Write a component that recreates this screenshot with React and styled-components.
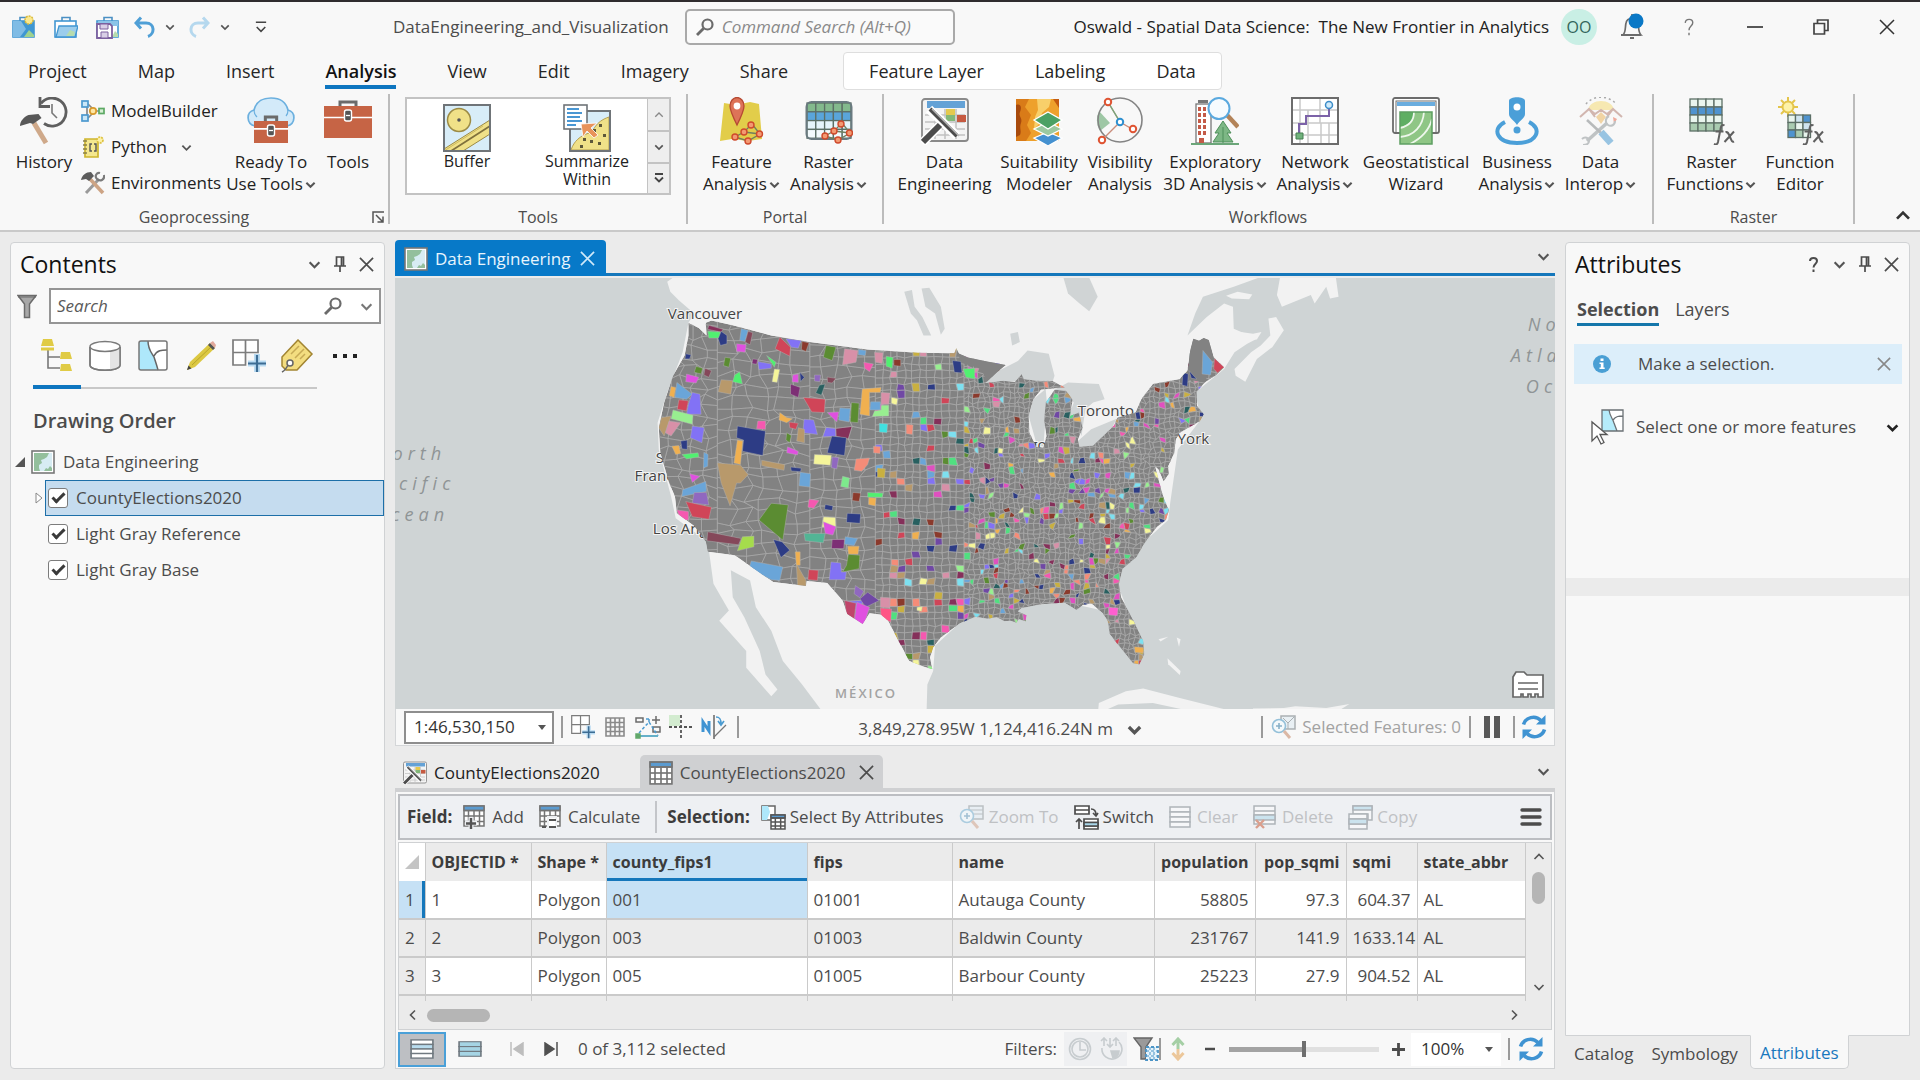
import { useState } from 'react';
import styled, { createGlobalStyle, css } from 'styled-components';

const GlobalStyle = createGlobalStyle`
  *, *::before, *::after { box-sizing: border-box; }
  body {
    margin: 0;
    background: #ebebeb;
    color: #4c4c4c;
    font-family: 'Open Sans', 'Noto Sans', sans-serif;
    font-size: 17px;
    line-height: 22px;
  }
  button, input, select { font: inherit; color: inherit; }
  button { background: transparent; border: none; padding: 0; cursor: pointer; }
  svg { display: block; flex: none; }
  h1, h2, p { margin: 0; }
`;

/* ---------- shared ---------- */

const Page = styled.div`
  display: flex;
  flex-direction: column;
  height: 100vh;
  overflow: hidden;
`;

const Divider = styled.span`
  flex: none;
  width: 2px;
  height: ${(p) => p.$h || 22}px;
  background: ${(p) => p.$color || '#9a9a9a'};
`;

const Spacer = styled.span`
  flex: 1;
`;

const IconButton = styled.button`
  display: grid;
  place-items: center;
  flex: none;
  width: ${(p) => p.$w || 26}px;
  height: ${(p) => p.$h || 26}px;
`;

const Chevron = ({ size = 12, color = '#555', weight = 2, dir = 'down' }) => {
  const turn = { down: 0, left: 90, up: 180, right: 270 }[dir];
  return (
    <svg width={size} height={size} viewBox="0 0 12 12">
      <path d="M1.5 4 6 8.5 10.5 4" transform={`rotate(${turn} 6 6)`} fill="none" stroke={color} strokeWidth={weight} />
    </svg>
  );
};

const Cross = ({ size = 16, color = '#4c4c4c', weight = 1.8 }) => (
  <svg width={size} height={size} viewBox="0 0 16 16">
    <path d="M1 1 15 15M15 1 1 15" stroke={color} strokeWidth={weight} />
  </svg>
);

const Pin = () => (
  <svg width="12" height="16" viewBox="0 0 12 16">
    <path d="M2.5 9.5V1h7v8.5M0 10h12M6 10v6M7.5 1v9" fill="none" stroke="#4c4c4c" strokeWidth="1.7" />
  </svg>
);

const Magnifier = ({ color = '#6b6b6b' }) => (
  <svg width="18" height="18" viewBox="0 0 18 18">
    <circle cx="11.5" cy="6.5" r="5" fill="none" stroke={color} strokeWidth="2.2" />
    <path d="M7.5 10.5 1 17" stroke={color} strokeWidth="2.8" />
  </svg>
);

const Refresh = () => (
  <svg width="26" height="26" viewBox="0 0 26 26" fill="none" stroke="#3f93d2" strokeWidth="3.6">
    <path d="M2.5 10.5C4.5 3.5 14 .5 20 6.5" />
    <path d="M23.5 15.5C21.5 22.5 12 25.5 6 19.5" />
    <path d="M24.5 1v9.5h-9.5zM1.5 25v-9.5h9.5z" fill="#3f93d2" stroke="none" />
  </svg>
);

const Funnel = () => (
  <svg width="20" height="26" viewBox="0 0 20 26">
    <path d="M1 2.5h18L12.5 11v13.5h-5V11z" fill="#a8a8a8" stroke="#6b6b6b" strokeWidth="1.5" />
    <path d="M1 4h18" stroke="#6b6b6b" />
  </svg>
);

const MapThumb = ({ size = 24 }) => (
  <svg width={size} height={size} viewBox="0 0 24 24">
    <rect x="1" y="1" width="22" height="22" fill="#fff" stroke="#777" strokeWidth="1.6" />
    <path d="M3 3h18v18H3z" fill="#d7ecf3" />
    <path d="M3 3h15l-2 4-3 2-3 1 1 3-3 2v3l1 3H3zM13 21l2-3 2 1 2-3 2 2v3z" fill="#93bf9c" />
  </svg>
);

const GridPlus = ({ size = 24 }) => (
  <svg width={size} height={size} viewBox="0 0 34 34">
    <path d="M1 1h25v12.5H1zM1 13.5h12.5V26H1zM13.5 1v12.5" fill="#fff" stroke="#7c7c7c" strokeWidth="1.7" />
    <path d="M25 15v18M16 24.5h18" stroke="#b9dbf2" strokeWidth="6" />
    <path d="M25 16v17M16 24.5h18" stroke="#3c6c93" strokeWidth="2.2" />
  </svg>
);

/* rows of a small table glyph, used by most of the table commands */
const TableGlyph = ({ x = 0, y = 0, w = 22, h = 22, head = '#5b9bd0', line = '#747474', cols = 4, rows = 4 }) => (
  <g fill="none" stroke={line} strokeWidth="1.5">
    <rect x={x + 1} y={y + 1} width={w - 2} height={h - 2} fill="#fff" />
    <rect x={x + 1} y={y + 1} width={w - 2} height={h / rows - 1} fill={head} />
    {Array.from({ length: rows - 1 }, (_, i) => (
      <path key={`r${i}`} d={`M${x + 1} ${y + ((i + 1) * h) / rows}h${w - 2}`} />
    ))}
    {Array.from({ length: cols - 1 }, (_, i) => (
      <path key={`c${i}`} d={`M${x + ((i + 1) * w) / cols} ${y + h / rows}v${h - h / rows - 1}`} />
    ))}
  </g>
);

/* ---------- ribbon drawings, 48 x 48 ---------- */

const Toolbox = ({ x, y, w, h }) => (
  <g>
    <path d={`M${x + w / 3} ${y + 6}v-5h${w / 3}v5`} fill="none" stroke="#6b6b6b" strokeWidth="3" />
    <rect x={x} y={y + 5} width={w} height={h - 5} fill="#c66445" />
    <path d={`M${x} ${y + 5 + (h - 5) * 0.36}h${w}`} stroke="#fff" strokeWidth="1.6" />
    <rect x={x + w / 2 - 3.5} y={y + 9} width="7" height="11" rx="2" fill="#555" stroke="#fff" strokeWidth="1.4" />
    <path d={`M${x + w / 2 - 2} ${y + 14.5}h4`} stroke="#fff" strokeWidth="1.3" />
  </g>
);

const NodeNet = ({ x, y }) => (
  <g transform={`translate(${x} ${y})`} stroke="#7a6a55" strokeWidth="1.4" fill="none">
    <path d="M4 15 13 10 21 2 29 12 17 19zM13 10l16 2" stroke="#6f7f5f" />
    {[[4, 15], [13, 10], [20, 3], [28.5, 12], [17, 19]].map(([cx, cy]) => (
      <circle key={cx} cx={cx} cy={cy} r="3" fill="#f39a72" stroke="#cf4a2c" />
    ))}
  </g>
);

const Checker = ({ x, y, cell, cols, rows, tones }) => (
  <g stroke="#5c6f66" strokeWidth="1.3">
    {Array.from({ length: cols * rows }, (_, i) => (
      <rect
        key={i}
        x={x + (i % cols) * cell}
        y={y + Math.floor(i / cols) * cell}
        width={cell}
        height={cell}
        fill={tones[(i * 7 + Math.floor(i / cols) * 2) % tones.length]}
      />
    ))}
  </g>
);

const EffEx = ({ x, y }) => (
  <g transform={`translate(${x} ${y})`} fill="none" stroke="#606060" strokeWidth="2">
    <path d="M10.5 1.5C7.5-.5 6.8 3 6.3 6L4 18c-.6 2.5-2 3-4 2M1.5 7.5h8" />
    <path d="M11.5 8c2.5-.5 3 1.5 4.5 5s2 5.5 4 4.5M20 7.5 10.5 18" />
  </g>
);

const drawings = {
  history: (
    <g fill="none">
      <path d="M21 6.500A14 14 0 1 1 24 26.500" stroke="#5f5f5f" strokeWidth="2.8" />
      <path d="M20 0v9.500h10" stroke="#5f5f5f" strokeWidth="2.8" />
      <path d="M32 7v9l5 5" stroke="#777" strokeWidth="1.6" />
      <path d="M14 26 26 46" stroke="#cfa98a" strokeWidth="5" />
      <path d="M0 29c0-5 4-9 8.500-11l10-1 3 4-8.500 6-3-1z" fill="#585858" />
    </g>
  ),
  cloudTools: (
    <g>
      <path d="M8 29C-1 27-1 15 7 13 9 5 15 1 24 1s15 4 17 12c8 2 8 14-1 16z" fill="#d3eaf9" stroke="#6cb0df" strokeWidth="1.7" />
      <path d="M7 13c0 3 1 5 3 7M41 13c0 3-1 5-2 6" fill="none" stroke="#6cb0df" strokeWidth="1.2" />
      <Toolbox x={7} y={19} w={34} h={27} />
    </g>
  ),
  toolbox: <Toolbox x={0} y={4} w={48} h={37} />,
  buffer: (
    <g>
      <rect x="1" y="1" width="46" height="46" fill="#d8edf8" />
      <circle cx="16" cy="16" r="11.5" fill="#f0e188" stroke="#9c8b45" strokeWidth="1.5" />
      <circle cx="16" cy="16" r="1.8" fill="#555" />
      <path d="M1 45 47 16v14L20 47H1z" fill="#f0e188" stroke="#9c8b45" />
      <path d="M8 47 47 22" stroke="#80713c" strokeWidth="1.7" />
      <path d="M1 47 40 22" stroke="#cdb95f" />
      <rect x="1" y="1" width="46" height="46" fill="none" stroke="#6f7478" strokeWidth="2" />
    </g>
  ),
  summarize: (
    <g>
      <rect x="7" y="7" width="40" height="40" fill="#d8edf8" />
      <path d="M8 46c3-9 9-14 18-17 6-2 5-11 20-16v33z" fill="#f0e188" stroke="#b59f50" />
      <rect x="7" y="7" width="40" height="40" fill="none" stroke="#6f7478" strokeWidth="2" />
      <path d="M36 20h3v3h-3zM30 25h3v3h-3zM40 30h3v3h-3zM27 36h3v3h-3zM35 38h3v3h-3zM17 41h3v3h-3zM20 34h3v3h-3z" fill="#5d573a" />
      <rect x="1" y="1" width="23" height="24" fill="#fff" stroke="#6f7478" strokeWidth="1.6" />
      <path d="M4 5h12M4 9h15M4 13h13M4 17h15M4 21h9" stroke="#4a97d3" strokeWidth="1.8" />
      <path d="M18 20 34 19 28 24 35 31 31 34 24 27 20 33z" fill="#e8935a" stroke="#fff" strokeWidth=".8" />
    </g>
  ),
  featureAnalysis: (
    <g>
      <path d="M6 6 18 8 32 5 41 7 44 42 30 44 14 42 2 44z" fill="#e2cd4a" />
      <path d="M19 28C15 20 12 14 12 9a7 8.500 0 0 1 14 0c0 5-3 11-7 19z" fill="#dd7358" stroke="#b64a33" strokeWidth="1.3" />
      <circle cx="19" cy="9" r="3.4" fill="#fff" />
      <NodeNet x={13} y={25} />
    </g>
  ),
  rasterAnalysis: (
    <g>
      <Checker x={2} y={6} cell={8.8} cols={5} rows={4} tones={['#83b98d', '#e6f5fb', '#5aa5da', '#b8dcec', '#e6f5fb', '#94d0ef', '#f3fafd']} />
      <rect x="1.5" y="5" width="45" height="37" rx="5" fill="none" stroke="#6a7a80" strokeWidth="2" />
      <NodeNet x={16} y={24} />
    </g>
  ),
  dataEngineering: (
    <g>
      <rect x="1" y="2" width="46" height="42" rx="3" fill="#f4f4f4" stroke="#8a8a8a" strokeWidth="1.8" />
      <path d="M6 4h38v7H6z" fill="#64a2d6" />
      <path d="M4 18h40M4 25h40M4 32h40M4 38h40M14 12v30M24 12v30M35 12v30" stroke="#c1c1c1" strokeWidth="1.5" />
      <path d="M25 12h9v6h-9z" fill="#e4c94e" />
      <path d="M36 18h9v7h-9z" fill="#c65a41" />
      <path d="M25 18h9v6h-9z" fill="#83b878" />
      <path d="M1 46 18 29M8 12 36 39" stroke="#fff" strokeWidth="9" />
      <path d="M2 45 19 28" stroke="#4c4c4c" strokeWidth="6" />
      <path d="M9 12 36 39" stroke="#4c4c4c" strokeWidth="4" />
      <path d="M11 12 38 39" stroke="#b5b5b5" strokeWidth="1.5" />
    </g>
  ),
  suitability: (
    <g>
      <rect x="1" y="2" width="43" height="42" fill="#eea12c" />
      <path d="M1 2h13l-4 8 6 8-4 10 4 8-5 8H1z" fill="#d97b18" />
      <path d="M1 8c5-2 6 3 4 7s3 6 1 11 1 8-1 12l-4 2z" fill="#a84a0c" />
      <path d="M22 2h14l-2 8-7 6-2 10-6 6 1-12 3-7z" fill="#f8cf6a" />
      <path d="M38 2h6v9z" fill="#c45b10" />
      <g stroke="#fff" strokeWidth="1.3">
        <path d="m33 35 14 6-14 8-14-8z" fill="#4591d0" />
        <path d="m33 25 14 7-14 7-14-7z" fill="#9cc9a0" />
        <path d="m33 15 14 8-14 9-14-9z" fill="#4ca164" />
      </g>
    </g>
  ),
  visibility: (
    <g fill="none">
      <path d="M3 14 14 26 4 34A22 22 0 0 1 3 14z" fill="#9ec7a5" />
      <circle cx="24" cy="23" r="22" stroke="#848484" strokeWidth="1.6" />
      <path d="M12 5 24 25 36 32M24 25 6 43" stroke="#c98d7c" strokeWidth="1.4" />
      <path d="M12 5 24 25" stroke="#74a77b" strokeWidth="1.4" />
      <circle cx="24" cy="25" r="3.2" fill="#fff" stroke="#2d8fd0" strokeWidth="2" />
      <g fill="#fff" stroke="#df5433" strokeWidth="2">
        <circle cx="12" cy="5" r="3.2" />
        <circle cx="37" cy="32" r="3.2" />
        <circle cx="6" cy="43" r="3.2" />
      </g>
    </g>
  ),
  exploratory: (
    <g>
      <path d="M7 3h10v3H7z" fill="#777" />
      <rect x="5" y="7" width="15" height="39" fill="#fff" stroke="#777" strokeWidth="1.3" />
      <path d="M7 10h3v4H7zm5 0h3v4h-3zM7 16h3v4H7zm5 0h3v4h-3zM7 22h3v4H7zm5 0h3v4h-3zM7 28h3v4H7zm5 0h3v4h-3zM7 34h3v4H7zm5 0h3v4h-3zM8 41h5v5H8z" fill="#c45b48" />
      <path d="M32 24 24 36h4l-6 9h20l-6-9h4z" fill="#7db785" stroke="#4f8f5a" />
      <path d="M32 30v16" stroke="#4f8f5a" />
      <path d="M0 47h48" stroke="#6ba679" strokeWidth="1.8" />
      <path d="m36 18 11 12" stroke="#b38358" strokeWidth="4.5" />
      <circle cx="28" cy="11.5" r="10.5" fill="#f6fbfe" stroke="#5aa9df" strokeWidth="2" />
    </g>
  ),
  network: (
    <g fill="none">
      <rect x="1" y="1" width="46" height="46" fill="#fff" />
      <path d="M1 13h46M1 26h46M1 38h46M9 1v46M29 1v25M38 26v21M30 26v21M17 13v34" stroke="#c9c9c9" strokeWidth="1.5" />
      <path d="M8 38V27h7v-8h23V9" stroke="#7c62a8" strokeWidth="2" />
      <circle cx="38" cy="8" r="3.5" fill="#cfeafa" stroke="#3c8cc8" strokeWidth="1.5" />
      <path d="M5 36h7v6H5z" fill="#70b27c" stroke="#457e50" />
      <rect x="1" y="1" width="46" height="46" stroke="#6c6c6c" strokeWidth="2" />
    </g>
  ),
  geostat: (
    <g fill="none">
      <rect x="1" y="1" width="46" height="35" rx="2" fill="#fff" stroke="#6c6c6c" strokeWidth="1.8" />
      <rect x="4" y="4" width="40" height="32" stroke="#6c6c6c" />
      <path d="M5 5h38v4H5z" fill="#6aaddf" />
      <path d="M8 15h32v32H8z" fill="#8fc685" />
      <path d="M8 15h15c-1 8-6 13-15 15z" fill="#5fae63" />
      <path d="M22 15c0 9-5 14-14 16M32 15c-1 14-10 24-24 25M40 22c-3 12-12 20-22 25" stroke="#eef7ec" strokeWidth="1.8" />
      <path d="M8 15h32v32H8z" stroke="#5e9f62" strokeWidth="1.5" />
    </g>
  ),
  business: (
    <g>
      <path d="M16 4c0-5 16-5 16 0v13c0 4-5 6-8 11-3-5-8-7-8-11z" fill="#4b9fd8" />
      <circle cx="24" cy="10" r="3.5" fill="#fff" />
      <circle cx="24" cy="33" r="3.5" fill="#4b9fd8" />
      <path d="M12 25c-14 7-8 21 12 21s26-14 12-21" fill="none" stroke="#4b9fd8" strokeWidth="4" />
    </g>
  ),
  interop: (
    <g fill="none" opacity=".6">
      <path d="M11 13C13 1 35 1 37 13z" fill="#f5df82" />
      <path d="M9 7C16-2 32-2 39 7" stroke="#777" strokeWidth="1.5" strokeDasharray="2 3" />
      <path d="M3 20 12 12l6 8M45 20l-9-8-6 8M12 12l6 5 6-4 6 4 6-5" stroke="#b98b80" strokeWidth="2" />
      <path d="m24 15 5 5-5 7-5-7z" fill="#edbd6e" />
      <path d="m36 20 4 2-3 5z" fill="#e9755e" />
      <path d="M10 44 30 26" stroke="#9aa0a3" strokeWidth="3.5" />
      <path d="M38 24c0 4-4 6-7 4s-3-7 1-9M5 42c3-3 7-1 7 2s-3 4-6 4" stroke="#9aa0a3" strokeWidth="2" />
      <path d="M10 23 24 36" stroke="#8c9194" strokeWidth="2.5" />
      <path d="M24 35 34 46" stroke="#5aa3d4" strokeWidth="7" />
    </g>
  ),
  rasterFx: (
    <g>
      <Checker x={2} y={2} cell={8} cols={4} rows={4} tones={['#e9f5ee', '#8bb992', '#4f93cf', '#cfe4ef', '#e9f5ee', '#6fa67a', '#a9cbb0']} />
      <EffEx x={26} y={27} />
    </g>
  ),
  functionEditor: (
    <g>
      <g stroke="#e4c54b" strokeWidth="2">
        <path d="M12 0v20M2 10h20M5 3l14 14M19 3 5 17" />
        <circle cx="12" cy="10" r="5.5" fill="#fdf2a8" />
      </g>
      <Checker x={12} y={18} cell={7.5} cols={3} rows={3} tones={['#e9f5ee', '#4f93cf', '#cfe4ef', '#a9cbb0', '#4f93cf']} />
      <EffEx x={27} y={27} />
    </g>
  ),
};

const Drawing = ({ name, size = 48 }) => (
  <svg width={size} height={size} viewBox="0 0 48 48">{drawings[name]}</svg>
);

/* ---------- title bar ---------- */

const TitleBar = styled.header`
  display: flex;
  align-items: center;
  height: 52px;
  border-top: 2px solid #2f2c2e;
  background: #f8f8f8;
`;

const QuickAccess = styled.div`
  display: flex;
  align-items: center;
  gap: 14px;
  width: 393px;
  padding-left: 12px;

  .cases { display: flex; gap: 18px; }
  .pair { display: flex; align-items: center; gap: 10px; }
`;

const CommandSearch = styled.label`
  display: flex;
  align-items: center;
  gap: 8px;
  width: 270px;
  height: 36px;
  margin-left: 16px;
  padding: 0 9px;
  border: 2px solid #a9a9a9;
  border-radius: 5px;
  background: #fafafa;

  input {
    flex: 1;
    min-width: 0;
    padding: 0;
    border: none;
    background: transparent;
    outline: none;
    font-style: italic;
  }
  input::placeholder { color: #8a8a8a; opacity: 1; }
`;

const DocTitle = styled.h1`
  font-size: 17px;
  font-weight: 400;
  white-space: nowrap;
`;

const PortalName = styled.p`
  margin-left: auto;
  color: #222;
  white-space: pre;
`;

const Avatar = styled.span`
  display: grid;
  place-items: center;
  width: 36px;
  height: 36px;
  margin: 0 11px 0 12px;
  border-radius: 50%;
  background: #c9efe5;
  color: #33665c;
  font-size: 16px;
`;

const QuickCase = ({ kind }) => (
  <svg width="24" height="24" viewBox="0 0 24 24">
    <path d="M8 6V2.500h8V6" fill="none" stroke="#4b90c4" strokeWidth="1.6" />
    <rect x="1" y="6" width="21" height="16" fill={kind === 'new' ? '#3f97d3' : '#fff'} stroke="#4297d2" strokeWidth="1.6" />
    {kind === 'new' && (
      <g>
        <path d="M1 6h8l5 8-6 8H1z" fill="#80bce5" />
        <path d="m12 22 5-7 5 5v2z" fill="#9fd28f" />
        <circle cx="17" cy="5" r="4" fill="#fbe98e" stroke="#d9b93c" strokeWidth="1.5" strokeDasharray="2 1" />
      </g>
    )}
    {kind === 'open' && (
      <g>
        <path d="M5 11h19l-3 11H2z" fill="#9ccdec" stroke="#4297d2" strokeWidth="1.3" />
        <path d="m12 21 4-6 5 2-1 4z" fill="#b7dcae" />
      </g>
    )}
    {kind === 'save' && (
      <g>
        <path d="M2 6h20v5H2z" fill="#8cc4e8" />
        <path d="m16 22 3-6 3 3v3z" fill="#b7dcae" />
        <path d="M1 9h13l2 2v12H1z" fill="#fff" stroke="#7d619f" strokeWidth="1.8" />
        <path d="M4 9h8v5H4zM5 17h7v6H5z" fill="#d9cfe6" stroke="#7d619f" />
      </g>
    )}
  </svg>
);

const Curl = ({ flip, color }) => (
  <svg width="21" height="22" viewBox="0 0 21 22">
    <g transform={flip ? 'translate(21 0) scale(-1 1)' : undefined} fill="none" stroke={color} strokeWidth="3">
      <path d="M7 1.500 2 7l5 5.500M2.500 7H12c9 0 9 11 2 13.500" />
    </g>
  </svg>
);

const Title = () => (
  <TitleBar>
    <QuickAccess>
      <span className="cases">
        <button type="button" aria-label="New project"><QuickCase kind="new" /></button>
        <button type="button" aria-label="Open project"><QuickCase kind="open" /></button>
        <button type="button" aria-label="Save project"><QuickCase kind="save" /></button>
      </span>
      <span className="pair">
        <button type="button" aria-label="Undo"><Curl color="#4f9fd6" /></button>
        <Chevron size={10} />
      </span>
      <span className="pair">
        <button type="button" aria-label="Redo"><Curl flip color="#b5d8ee" /></button>
        <Chevron size={10} />
      </span>
      <IconButton type="button" $w={34} aria-label="Customize">
        <svg width="12" height="14" viewBox="0 0 14 14" fill="none" stroke="#444" strokeWidth="1.8">
          <path d="M1 1.500h12M2 7l5 5 5-5" />
        </svg>
      </IconButton>
    </QuickAccess>
    <DocTitle>DataEngineering_and_Visualization</DocTitle>
    <CommandSearch>
      <Magnifier />
      <input type="text" aria-label="Command Search" placeholder="Command Search (Alt+Q)" />
    </CommandSearch>
    <PortalName>Oswald - Spatial Data Science:  The New Frontier in Analytics</PortalName>
    <Avatar>OO</Avatar>
    <IconButton type="button" $w={48} $h={36} aria-label="Notifications">
      <svg width="24" height="28" viewBox="0 0 24 28">
        <path d="M3 22c3-3 2-8 3-12 1-6 11-6 12 0 1 4 0 9 3 12zM12 1v4" fill="none" stroke="#6b6b6b" strokeWidth="1.7" />
        <path d="M1 22h20M10 25h4" stroke="#6b6b6b" strokeWidth="2" />
        <circle cx="16" cy="8" r="7.5" fill="#0a78c6" />
      </svg>
    </IconButton>
    <IconButton type="button" $w={66} $h={36} aria-label="Help">
      <svg width="10" height="18" viewBox="0 0 12 20" fill="none" stroke="#777" strokeWidth="1.7">
        <path d="M1.500 5C2-.5 10.500-.5 10.500 5c0 4-4.500 4-4.500 9M6 17v3" />
      </svg>
    </IconButton>
    <IconButton type="button" $w={66} $h={36} aria-label="Minimize">
      <svg width="16" height="16" viewBox="0 0 16 16"><path d="M0 8h16" stroke="#444" strokeWidth="1.8" /></svg>
    </IconButton>
    <IconButton type="button" $w={66} $h={36} aria-label="Restore">
      <svg width="16" height="16" viewBox="0 0 16 16" fill="none" stroke="#444" strokeWidth="1.7">
        <path d="M1 4.500h10.500V15H1zM4.500 4V1H15v10.500h-3" />
      </svg>
    </IconButton>
    <IconButton type="button" $w={66} $h={36} aria-label="Close"><Cross color="#333" weight={1.5} /></IconButton>
  </TitleBar>
);

/* ---------- ribbon ---------- */

const TabRow = styled.nav`
  display: flex;
  align-items: center;
  gap: 51px;
  height: 38px;
  padding-left: 28px;
  background: #f8f8f8;
`;

const RibbonTab = styled.button`
  height: 36px;
  padding-top: 3px;
  color: #262626;
  font-size: 18px;
  border-bottom: 4px solid transparent;
  white-space: nowrap;
  ${(p) => p.$active && css`
    font-weight: 600;
    color: #111;
    border-color: #0e76c0;
  `}
`;

const ContextTabs = styled.div`
  display: flex;
  gap: 51px;
  height: 38px;
  margin-left: 4px;
  padding: 0 25px;
  border: 1px solid #dedede;
  border-radius: 4px;
  background: #fff;
`;

const RibbonBar = styled.section`
  display: flex;
  height: 142px;
  padding: 4px 0 6px;
  background: #f8f8f8;
  border-bottom: 2px solid #c9c9c9;
`;

const RibbonGroup = styled.div`
  position: relative;
  display: flex;
  flex-direction: column;
  padding: 0 ${(p) => p.$pad || 10}px;
  border-right: 2px solid #bcbcbc;

  .tools { display: flex; flex: 1; }
`;

const GroupLabel = styled.div`
  height: 14px;
  line-height: 14px;
  font-size: 16px;
  text-align: center;
`;

const BigTool = styled.button`
  display: flex;
  flex-direction: column;
  align-items: center;
  gap: 6px;
  width: ${(p) => p.$w}px;
  padding-top: 3px;
  color: #222;
  white-space: nowrap;

  .last { display: flex; align-items: center; justify-content: center; gap: 2px; }
`;

const SmallTools = styled.div`
  display: flex;
  flex-direction: column;
  gap: 14px;
  width: 146px;
  padding-top: 6px;
`;

const SmallTool = styled.button`
  display: flex;
  align-items: center;
  gap: 6px;
  height: 22px;
  color: #222;
  .caret { margin-left: 8px; }
`;

const Gallery = styled.div`
  display: grid;
  grid-template-columns: 1fr 22px;
  width: 266px;
  height: 98px;
  margin-top: 3px;
  border: 2px solid #c3c3c3;
  background: #fff;
`;

const GalleryItems = styled.div`
  display: grid;
  grid-template-columns: 1fr 1fr;
`;

const GalleryItem = styled.button`
  display: flex;
  flex-direction: column;
  align-items: center;
  padding-top: 5px;
  color: #222;
  font-size: 16px;
  line-height: 18px;
`;

const GallerySteps = styled.div`
  display: grid;
  grid-template-rows: repeat(3, 1fr);
  border-left: 1px solid #c3c3c3;

  button { display: grid; place-items: center; background: #eee; }
  button + button { border-top: 2px solid #c3c3c3; }
`;

const Launcher = styled.button`
  position: absolute;
  right: 4px;
  bottom: 1px;
`;

const Collapse = styled.button`
  align-self: flex-end;
  margin: 0 9px 0 auto;
`;

const Tool = ({ icon, top, bottom, caret, w }) => (
  <BigTool type="button" $w={w}>
    <Drawing name={icon} />
    <span>
      {top}
      {bottom && (
        <span className="last">
          {bottom}
          {caret && <Chevron size={11} weight={2.2} />}
        </span>
      )}
    </span>
  </BigTool>
);

const workflows = [
  { icon: 'dataEngineering', top: 'Data', bottom: 'Engineering', w: 101 },
  { icon: 'suitability', top: 'Suitability', bottom: 'Modeler', w: 88 },
  { icon: 'visibility', top: 'Visibility', bottom: 'Analysis', w: 74 },
  { icon: 'exploratory', top: 'Exploratory', bottom: '3D Analysis', caret: true, w: 116 },
  { icon: 'network', top: 'Network', bottom: 'Analysis', caret: true, w: 84 },
  { icon: 'geostat', top: 'Geostatistical', bottom: 'Wizard', w: 118 },
  { icon: 'business', top: 'Business', bottom: 'Analysis', caret: true, w: 84 },
  { icon: 'interop', top: 'Data', bottom: 'Interop', caret: true, w: 83 },
];

const Ribbon = () => (
  <>
    <TabRow>
      {['Project', 'Map', 'Insert', 'Analysis', 'View', 'Edit', 'Imagery', 'Share'].map((t) => (
        <RibbonTab key={t} type="button" $active={t === 'Analysis'}>{t}</RibbonTab>
      ))}
      <ContextTabs>
        {['Feature Layer', 'Labeling', 'Data'].map((t) => (
          <RibbonTab key={t} type="button">{t}</RibbonTab>
        ))}
      </ContextTabs>
    </TabRow>
    <RibbonBar>
      <RibbonGroup $pad={7}>
        <div className="tools">
          <Tool icon="history" top="History" w={74} />
          <SmallTools>
            <SmallTool type="button">
              <svg width="24" height="24" viewBox="0 0 24 24" fill="none" strokeWidth="1.7">
                <path d="M6 7v10M7 5l5 5M7 19l5-5M15 12h3" stroke="#888" />
                <rect x="1" y="2" width="6" height="6" fill="#cbe7f8" stroke="#4d99cf" />
                <rect x="1" y="16" width="6" height="6" fill="#cbe7f8" stroke="#4d99cf" />
                <circle cx="12" cy="12" r="3.2" fill="#fde7a5" stroke="#d99b2c" />
                <rect x="18" y="9.5" width="5" height="5" fill="#d7efd5" stroke="#5da964" />
              </svg>
              ModelBuilder
            </SmallTool>
            <SmallTool type="button">
              <svg width="24" height="24" viewBox="0 0 24 24" fill="none">
                <path d="M4 4h13v18H4z" fill="#f4e78f" stroke="#cdb52f" strokeWidth="1.7" />
                <path d="M2 6h4M2 10h4M2 14h4M2 18h4" stroke="#8a8148" strokeWidth="1.7" />
                <path d="M11 9H9v7h2M13 9h2v7h-2" stroke="#555" strokeWidth="1.4" />
                <circle cx="19" cy="5" r="3" fill="#fdf2a8" stroke="#dcbf3d" strokeWidth="1.7" strokeDasharray="2 1" />
              </svg>
              Python
              <span className="caret"><Chevron size={11} /></span>
            </SmallTool>
            <SmallTool type="button">
              <svg width="24" height="24" viewBox="0 0 24 24" fill="none">
                <path d="M5 22 18 8" stroke="#9a9a9a" strokeWidth="3" />
                <path d="M23 4c1 5-4 7-7 4s0-7 3-6" stroke="#7a7a7a" strokeWidth="2.2" />
                <path d="m9 8 13 14" stroke="#cda485" strokeWidth="3.6" />
                <path d="M0 9c1-5 5-8 10-8l3 4-5 5-3-2z" fill="#5c5c5c" />
              </svg>
              Environments
            </SmallTool>
          </SmallTools>
          <Tool icon="cloudTools" top="Ready To" bottom="Use Tools" caret w={88} />
          <Tool icon="toolbox" top="Tools" w={66} />
        </div>
        <GroupLabel>Geoprocessing</GroupLabel>
        <Launcher type="button" aria-label="Geoprocessing options">
          <svg width="12" height="12" viewBox="0 0 12 12" fill="none" stroke="#555" strokeWidth="1.5">
            <path d="M1 12V1h11M4 4l7 7M11 5.500V11H5.500" />
          </svg>
        </Launcher>
      </RibbonGroup>
      <RibbonGroup $pad={15}>
        <div className="tools">
          <Gallery>
            <GalleryItems>
              <GalleryItem type="button"><Drawing name="buffer" />Buffer</GalleryItem>
              <GalleryItem type="button"><Drawing name="summarize" />Summarize Within</GalleryItem>
            </GalleryItems>
            <GallerySteps>
              <button type="button" aria-label="Previous"><Chevron dir="up" size={10} color="#888" weight={1.6} /></button>
              <button type="button" aria-label="Next"><Chevron size={10} /></button>
              <button type="button" aria-label="More">
                <svg width="10" height="10" viewBox="0 0 10 10" fill="none" stroke="#444" strokeWidth="1.8">
                  <path d="M1 1h8M1 4.500l4 4 4-4" />
                </svg>
              </button>
            </GallerySteps>
          </Gallery>
        </div>
        <GroupLabel>Tools</GroupLabel>
      </RibbonGroup>
      <RibbonGroup>
        <div className="tools">
          <Tool icon="featureAnalysis" top="Feature" bottom="Analysis" caret w={87} />
          <Tool icon="rasterAnalysis" top="Raster" bottom="Analysis" caret w={87} />
        </div>
        <GroupLabel>Portal</GroupLabel>
      </RibbonGroup>
      <RibbonGroup>
        <div className="tools">{workflows.map((w) => <Tool key={w.icon} {...w} />)}</div>
        <GroupLabel>Workflows</GroupLabel>
      </RibbonGroup>
      <RibbonGroup $pad={11}>
        <div className="tools">
          <Tool icon="rasterFx" top="Raster" bottom="Functions" caret w={93} />
          <Tool icon="functionEditor" top="Function" bottom="Editor" w={84} />
        </div>
        <GroupLabel>Raster</GroupLabel>
      </RibbonGroup>
      <Collapse type="button" aria-label="Collapse ribbon"><Chevron dir="up" size={16} color="#333" /></Collapse>
    </RibbonBar>
  </>
);

/* ---------- panels ---------- */

const Workspace = styled.main`
  display: grid;
  grid-template-columns: 375px minmax(0, 1fr) 345px;
  gap: 10px;
  flex: 1;
  min-height: 0;
  padding: 8px 10px 11px;
`;

const Panel = styled.section`
  display: flex;
  flex-direction: column;
  min-height: 0;
  margin-top: 2px;
  border: 1px solid #d0d2d4;
  border-radius: ${(p) => p.$radius || '4px'};
  background: #f8f8f8;
`;

const PanelHead = styled.div`
  display: flex;
  align-items: center;
  height: 42px;
  padding: 0 5px 0 9px;

  h2 {
    flex: 1;
    color: #111;
    font-size: 23px;
    font-weight: 400;
  }
`;

const SearchRow = styled.div`
  display: flex;
  align-items: center;
  gap: 12px;
  padding: 3px 3px 0 6px;
`;

const SearchBox = styled.label`
  display: flex;
  align-items: center;
  gap: 18px;
  flex: 1;
  height: 36px;
  padding: 0 6px;
  border: 2px solid #959595;
  background: #fff;

  input { flex: 1; min-width: 0; padding: 0; border: none; outline: none; font-style: italic; }
  input::placeholder { color: #5a5a5a; opacity: 1; }
`;

const ListTabs = styled.div`
  display: flex;
  width: 284px;
  height: 65px;
  margin-left: 22px;
  border-bottom: 2px solid #c8c8c8;
`;

const ListTab = styled.button`
  display: grid;
  place-items: center;
  flex: none;
  width: 48px;
  height: 65px;
  padding-top: 3px;
  border-bottom: 4px solid ${(p) => (p.$active ? '#0e76c0' : 'transparent')};
`;

const TreeTitle = styled.h2`
  margin: 21px 0 12px 22px;
  font-size: 20px;
  font-weight: 600;
`;

const TreeRow = styled.div`
  display: flex;
  align-items: center;
  height: 36px;
  padding-left: ${(p) => p.$indent}px;

  .twist { width: ${(p) => (p.$root ? 15 : 10)}px; }
  .label {
    display: flex;
    align-items: center;
    gap: 8px;
    flex: 1;
    height: 36px;
    padding-left: ${(p) => (p.$root ? 0 : 2)}px;
    border: 1px solid transparent;
    ${(p) => p.$selected && css`
      border-color: #1d6fa8;
      background: #c5dcef;
    `}
  }
`;

const Tick = styled.input`
  appearance: none;
  display: grid;
  place-items: center;
  width: 20px;
  height: 20px;
  margin: 0;
  border: 1px solid #7c7c7c;
  border-radius: 3px;
  background: #fff;

  &:checked::after {
    content: '';
    width: 13px;
    height: 7px;
    margin-bottom: 4px;
    border: solid #3a3a3a;
    border-width: 0 0 3px 3px;
    transform: rotate(-45deg);
  }
`;

const layers = ['CountyElections2020', 'Light Gray Reference', 'Light Gray Base'];

const Contents = () => (
  <Panel>
    <PanelHead>
      <h2>Contents</h2>
      <IconButton type="button" aria-label="Options"><Chevron size={13} /></IconButton>
      <IconButton type="button" aria-label="Pin"><Pin /></IconButton>
      <IconButton type="button" aria-label="Close"><Cross size={15} /></IconButton>
    </PanelHead>
    <SearchRow>
      <Funnel />
      <SearchBox>
        <input type="text" aria-label="Search" placeholder="Search" />
        <Magnifier />
        <Chevron size={13} color="#777" />
      </SearchBox>
    </SearchRow>
    <ListTabs>
      <ListTab type="button" $active aria-label="Drawing order">
        <svg width="32" height="34" viewBox="0 0 32 34">
          <path d="M7 11v18h12M7 18h12" fill="none" stroke="#777" strokeWidth="1.6" />
          <path d="M2 0h9l2 7H0zM0 8.500h13v3H0zM20 13h9l2 7H19zM20 25h9l2 7H19z" fill="#e0cb45" />
        </svg>
      </ListTab>
      <ListTab type="button" aria-label="Data source">
        <svg width="32" height="32" viewBox="0 0 32 32" fill="none" stroke="#7a7a7a" strokeWidth="1.5">
          <path d="M1 7v18c0 7 30 7 30 0V7" fill="#fff" />
          <path d="M21 12v18c6-1 10-2 10-5V8z" fill="#e4e4e4" stroke="none" />
          <path d="M1 7v18c0 7 30 7 30 0V7" />
          <ellipse cx="16" cy="6.5" rx="15" ry="5" fill="#fff" />
        </svg>
      </ListTab>
      <ListTab type="button" aria-label="Selection">
        <svg width="30" height="32" viewBox="0 0 30 32">
          <rect x="1" y="1" width="28" height="29" rx="2" fill="#fff" />
          <path d="M1 1h9c0 9 4 12 6 16 1 3 3 9 4 13H1z" fill="#aee8fb" />
          <path d="M10 1c0 9 4 12 6 16 1 3 3 9 4 13M16 16c3-6 8-6 13-6" fill="none" stroke="#666" strokeWidth="1.5" />
          <rect x="1" y="1" width="28" height="29" rx="2" fill="none" stroke="#777" strokeWidth="1.5" />
        </svg>
      </ListTab>
      <ListTab type="button" aria-label="Editing">
        <svg width="30" height="32" viewBox="0 0 30 32">
          <path d="m1 30 3-8L24 3l5 5L9 27z" fill="#dcc842" />
          <path d="m6 25 20-19" stroke="#b7a52c" />
          <path d="m1 30 1.500-4.500 3 3z" fill="#444" />
          <path d="m22 5 5 5 2-2-5-5z" fill="#555" />
          <path d="m24 3 5 5 1-3-3-4z" fill="#e2a89c" />
        </svg>
      </ListTab>
      <ListTab type="button" aria-label="Snapping"><GridPlus size={34} /></ListTab>
      <ListTab type="button" aria-label="Labeling">
        <svg width="34" height="34" viewBox="0 0 34 34" fill="none" stroke="#a28532" strokeWidth="1.5">
          <path d="M2 18 18 1l14 14-15 16H6l-4-4z" fill="#f3dd80" />
          <path d="m11 15 8-8M15 19l9-9M20 20l5-5" stroke="#c7aa55" />
          <circle cx="10" cy="24" r="3" fill="#fff" stroke="#666" />
          <path d="M8 26c-2 4-4 6-6 7" stroke="#666" />
        </svg>
      </ListTab>
      <ListTab type="button" aria-label="More">
        <svg width="24" height="6" viewBox="0 0 24 6"><path d="M0 1h4v4H0zM10 1h4v4h-4zM20 1h4v4h-4z" fill="#222" /></svg>
      </ListTab>
    </ListTabs>
    <TreeTitle>Drawing Order</TreeTitle>
    <TreeRow $indent={4} $root>
      <svg className="twist" height="12" viewBox="0 0 15 12"><path d="M0 11 10 1v10z" fill="#555" /></svg>
      <span className="label"><MapThumb />Data Engineering</span>
    </TreeRow>
    {layers.map((name, i) => (
      <TreeRow key={name} $indent={24} $selected={i === 0}>
        <svg className="twist" height="12" viewBox="0 0 10 12">
          {i === 0 && <path d="m1 1 6 5-6 5z" fill="#fff" stroke="#888" />}
        </svg>
        <label className="label"><Tick type="checkbox" defaultChecked />{name}</label>
      </TreeRow>
    ))}
  </Panel>
);

/* ---------- map ---------- */

const MapFrame = styled.div`
  flex: 1;
  min-height: 0;
  margin-top: 2px;
  position: relative;
  overflow: hidden;
  background: #cfd4d5;

  > svg { width: 100%; height: 100%; }
  .city { font-size: 15px; fill: #444; stroke: #f4f4f4; stroke-width: 2px; paint-order: stroke; }
  .water { font-size: 18px; font-style: italic; letter-spacing: 5px; fill: #8f9496; }
  .water .west { text-anchor: end; }
  .country { font-size: 13px; font-weight: 600; letter-spacing: 2px; fill: #a3a3a3; }
`;

const MapBadge = styled.button`
  position: absolute;
  right: 11px;
  bottom: 10px;
`;

const US = `785,262 812,278 832,300 830,262 845,256 900,270 1000,300 1100,320 1250,342 1380,352 1475,353 1480,338 1488,355
1510,366 1560,378 1608,388 1590,405 1556,442 1600,435 1632,438 1650,415 1655,430 1690,435 1730,436 1762,455 1700,462 1680,490 1668,540
1670,590 1688,632 1706,634 1714,600 1708,555 1712,500 1735,462 1765,465 1782,492 1775,540 1798,530 1808,575 1796,610
1800,632 1835,628 1890,568 1898,545 1945,530 1960,490 1990,445 2060,430 2080,405 2087,345 2095,310 2110,316 2122,308
2135,314 2148,365 2175,395 2155,418 2125,440 2104,468 2105,510 2122,535 2112,556 2060,590 2050,610 2046,650 2030,690 2032,712
2018,735 2005,700 1996,690 2012,760 2020,790 2032,820 2024,850 2000,872 1968,920 1948,960 1912,995 1902,1040 1908,1080 1940,1150 1965,1210
1968,1250 1955,1280 1938,1276 1900,1222 1878,1190 1873,1150 1860,1128 1830,1098 1808,1104 1792,1118 1760,1096 1700,1102
1650,1112 1640,1122 1662,1134 1660,1152 1642,1146 1636,1156 1620,1150 1605,1152 1585,1140 1560,1144 1530,1138 1490,1158 1440,1200 1420,1230 1412,1260 1418,1295 1398,1288 1358,1270
1330,1210 1303,1150 1285,1132 1255,1128 1237,1160 1197,1130 1185,1090 1145,1038 1092,1032 1090,1047 1005,1035 905,955
835,945 830,915 800,868 755,830 750,780 735,740 712,650 708,575 722,500 745,420 775,360 785,300`;

const LAND = [
  `745,128 730,140 738,170 760,195 800,235 785,262 770,350 730,470 705,560 708,640 740,780 752,845 835,915 850,1040 890,1120 865,1150
935,1240 935,1290 1000,1375 1016,1355 985,1310 970,1240 930,1140 900,1080 895,1000 945,1030 960,1110 1000,1180 1030,1270 1080,1340 1132,1420
1403,1420 1405,1340 1420,1300 1425,1225 1500,1145 1640,1110 1760,1094 1860,1120 1960,1270 1935,1150 1898,1040 1915,985 1968,915
2030,850 2035,800 2055,640 2115,550 2100,470 2175,400 2202,350 2235,325 2260,310 2200,280 2198,215 2175,205 2130,245 2080,300
2100,235 2120,185 2200,155 2265,128`,
  '2202,400 2245,350 2270,330 2295,300 2290,250 2310,245 2330,285 2300,335 2260,370 2230,438 2205,420',
  '2320,128 2465,128 2472,185 2450,190 2440,155 2410,205 2400,180 2325,215 2312,180',
  '2180,182 2210,170 2248,178 2240,192 2195,190',
  '2218,290 2250,295 2272,290 2260,312 2230,310',
  '1850,1395 1920,1360 1965,1352 2060,1380 2180,1415 2090,1420 1990,1395 1900,1400 1860,1420 1848,1420',
  '2250,1412 2330,1410 2360,1405 2440,1410 2500,1398 2470,1420 2250,1420',
  '2028,1262 2062,1300 2060,1312 2030,1280',
  '2005,1205 2030,1198 2010,1212',
  '2052,1200 2062,1205 2058,1228',
];

const WATER = [
  '1758,128 1825,128 1847,185 1825,228 1800,205 1770,175',
  '1345,170 1365,165 1372,215 1392,245 1415,300 1395,300 1378,255 1362,235',
  '1390,160 1410,158 1440,215 1450,280 1440,298 1425,235 1400,215',
  '1620,295 1640,290 1645,320 1625,330',
  '1556,442 1590,405 1640,376 1665,345 1720,355 1735,420 1730,438 1640,436',
  '1668,540 1680,490 1712,460 1715,500 1706,630 1690,630',
  '1735,462 1770,440 1850,445 1865,490 1835,500 1815,520 1805,600 1795,570 1770,545 1785,500',
  '1796,615 1830,580 1896,548 1880,585 1838,632 1802,636',
];

const BIG_COUNTIES = [
  ['#2d3c85', '912,570 985,585 978,658 925,645 928,612 910,605'],
  ['#f0b050', '912,612 926,615 920,685 903,680'],
  ['#b8996b', '860,680 920,686 940,715 920,740 910,740 893,808 870,740'],
  ['#6aa5d8', '770,760 830,735 832,765 768,780'],
  ['#9068c0', '800,768 832,768 838,805 795,800'],
  ['#d04558', '778,795 845,812 838,848 795,840'],
  ['#f558b0', '755,820 785,825 785,850 765,850'],
  ['#5b8c32', '1000,800 1044,805 1030,910 968,850'],
  ['#2d3c85', '1005,908 1028,915 1048,940 1025,962'],
  ['#85485a', '835,885 922,905 915,924 833,912'],
  ['#a5dc4c', '925,900 955,898 955,930 912,942'],
  ['#6aa5d8', '948,972 1030,990 1022,1030 1000,1028 942,995'],
  ['#b8996b', '1065,980 1090,1030 1090,1047 1068,1045'],
  ['#f0b050', '1062,945 1075,945 1075,985 1065,985'],
  ['#2d3c85', '1157,600 1195,605 1190,658 1145,650'],
  ['#f5f59a', '1112,655 1156,657 1153,687 1110,683'],
  ['#6aa5d8', '1075,708 1102,712 1100,752 1072,748'],
  ['#2d3c85', '1197,830 1232,832 1230,860 1195,857'],
  ['#e050e0', '1135,855 1168,870 1160,895 1140,890'],
  ['#52b595', '1085,890 1140,890 1135,918 1088,912'],
  ['#7d2f75', '1158,908 1190,908 1188,935 1156,935'],
  ['#f0b050', '1198,928 1228,928 1225,952 1200,952'],
  ['#5b8c32', '1200,952 1230,955 1228,995 1185,1005 1195,985'],
  ['#8272f5', '1155,975 1180,978 1182,1005 1195,1005 1192,1028 1150,1028'],
  ['#d04558', '1097,998 1122,1000 1120,1030 1095,1028'],
  ['#7048a5', '1230,1085 1250,1065 1280,1090 1245,1110'],
  ['#9068c0', '1218,1045 1240,1062 1230,1082 1215,1070'],
  ['#e050e0', '1222,1095 1255,1110 1240,1165 1216,1145'],
  ['#c0456a', '1190,1090 1220,1098 1215,1145 1195,1130'],
  ['#ff5585', '1283,1112 1312,1115 1310,1155 1285,1140'],
  ['#d890a8', '1283,1080 1308,1082 1308,1112 1283,1110'],
  ['#d04558', '1022,305 1050,335 1048,362 1010,340'],
  ['#8272f5', '1038,310 1078,315 1070,338 1052,335'],
  ['#8b3a2c', '1080,318 1098,322 1090,348 1078,342'],
  ['#5b8c32', '1142,330 1168,335 1158,375 1135,365'],
  ['#d890a8', '1190,340 1225,345 1220,380 1185,388'],
  ['#6aa5d8', '1226,342 1246,345 1244,360 1226,358'],
  ['#d890a8', '1268,350 1290,352 1288,384 1270,380'],
  ['#f0b050', '1236,460 1285,455 1283,470 1255,470 1255,540 1230,535'],
  ['#d890a8', '1285,470 1308,472 1305,505 1285,505'],
  ['#6aa5d8', '1258,498 1283,498 1283,522 1256,522'],
  ['#98ef90', '1268,525 1285,522 1285,508 1305,508 1305,540 1262,542'],
  ['#5b8c32', '1208,500 1228,502 1225,560 1205,558'],
  ['#d04558', '1083,485 1140,490 1138,530 1105,528'],
  ['#e050e0', '1145,530 1175,528 1170,558'],
  ['#6aa5d8', '1178,516 1205,518 1202,558 1175,552'],
  ['#286060', '1125,448 1140,445 1130,478 1115,472'],
  ['#9068c0', '1112,418 1128,418 1126,438 1112,436'],
  ['#85485a', '1145,424 1168,428 1158,442 1146,440'],
  ['#8272f5', '1085,550 1110,552 1120,595 1082,590'],
  ['#f558b0', '965,555 985,555 985,580 962,578'],
  ['#b8996b', '870,432 900,435 895,475 862,468'],
  ['#6aa5d8', '755,440 795,475 780,490 750,485'],
  ['#f0b050', '740,452 752,455 748,485 735,480'],
  ['#8272f5', '795,470 815,475 818,535 780,535 785,505'],
  ['#d04558', '760,492 785,495 780,525 756,520'],
  ['#98ef90', '745,522 797,538 795,565 740,548'],
  ['#b8996b', '715,545 740,540 722,600 708,575'],
  ['#d890a8', '735,555 765,560 740,600 725,590'],
  ['#8272f5', '795,570 826,575 820,620 790,605'],
  ['#2d3c85', '765,615 782,612 782,640 768,638'],
  ['#f0b050', '742,630 760,628 765,652 752,655'],
  ['#50f070', '768,655 810,650 812,662 780,668'],
  ['#6aa5d8', '825,648 836,655 835,690 824,695'],
  ['#e050e0', '788,712 815,720 795,738'],
  ['#85305a', '838,270 875,282 870,290 835,282'],
  ['#50f070', '835,288 868,290 865,308 838,308'],
  ['#2d3c85', '870,288 885,300 885,325 868,330 862,310'],
  ['#6aa5d8', '922,280 940,285 932,318 918,315'],
  ['#85485a', '940,288 952,292 945,328 932,320'],
  ['#e050e0', '910,325 935,328 932,350 910,348'],
  ['#e050e0', '780,415 812,425 805,442 778,438'],
  ['#5b8c32', '805,392 822,398 818,415 800,410'],
  ['#85485a', '828,398 845,405 838,425 825,418'],
  ['#5b8c32', '880,365 895,368 890,395 876,390'],
  ['#2d3c85', '778,355 792,358 788,370 776,370'],
  ['#8272f5', '965,378 1000,385 1000,398 968,402'],
  ['#50f070', '988,360 1012,380 1008,395'],
  ['#50f070', '905,418 918,408 925,445 900,438'],
  ['#f5f59a', '1008,400 1022,402 1015,440 1002,438'],
  ['#e050e0', '1056,418 1070,415 1070,440 1054,438'],
  ['#2d3c85', '1074,410 1086,425 1076,438'],
  ['#7d2f75', '1050,445 1075,455 1070,485 1050,475'],
  ['#7d2f75', '952,370 965,372 962,386 950,384'],
  ['#f558b0', '1240,380 1265,385 1255,408 1242,398'],
  ['#50f070', '1298,362 1316,366 1314,398 1298,392'],
  ['#8b3a2c', '1318,372 1336,372 1336,392 1318,390'],
  ['#f58c78', '1220,668 1255,665 1250,685 1235,705 1215,702'],
  ['#f58c78', '1265,630 1283,632 1282,652 1265,650'],
  ['#9068c0', '1158,662 1175,664 1170,698 1156,694'],
  ['#50f070', '1250,768 1290,770 1288,782 1250,782'],
  ['#f0b050', '1253,783 1272,785 1270,808 1252,804'],
  ['#8b3a2c', '1212,768 1232,770 1228,795 1210,792'],
  ['#6aa5d8', '1192,900 1224,905 1215,926 1190,922'],
  ['#b8996b', '975,672 1035,685 1033,702 975,688'],
  ['#f0b050', '1022,530 1040,545 1055,548 1040,560 1020,552'],
  ['#d04558', '1046,558 1070,562 1064,580 1048,575'],
  ['#5b8c32', '1040,590 1052,598 1048,620 1038,612'],
  ['#b8996b', '1070,575 1086,580 1086,620 1066,615'],
  ['#e050e0', '1042,632 1070,645 1068,656 1040,650'],
  ['#f558b0', '1098,788 1124,792 1110,815 1095,812'],
  ['#2d3c85', '1140,804 1160,808 1158,822 1138,818'],
  ['#2d3c85', '1050,692 1078,696 1076,706 1052,704'],
  ['#7dea8c', '1185,720 1203,725 1200,755 1180,750'],
  ['#40e0e0', '1280,562 1302,564 1300,590 1280,588'],
  ['#f58c78', '1350,565 1368,567 1366,595 1350,593'],
  ['#c9b040', '1275,695 1296,697 1294,725 1275,723'],
  ['#2d3c85', '1470,375 1492,378 1495,412 1475,410'],
  ['#50f070', '1498,400 1528,398 1528,430 1505,425'],
  ['#6aa5d8', '2120,345 2145,380 2140,418 2118,415'],
  ['#d04558', '2150,368 2175,395 2158,412 2148,400'],
  ['#2d3c85', '2068,410 2082,415 2080,452 2066,448'],
  ['#2d3c85', '2084,405 2104,430 2090,428'],
  ['#ff5fd0', '1875,1110 1900,1112 1898,1135 1876,1133'],
  ['#f0b050', '1942,1228 1966,1230 1965,1246 1944,1245'],
  ['#f5f59a', '1378,1110 1392,1108 1390,1122 1378,1120'],
];

const TONES = ['#e050c0', '#6aa5d8', '#50e080', '#f0b050', '#f5f59a', '#2d3c85', '#85305a', '#8b3a2c', '#8272f5', '#f58c78',
  '#d890a8', '#c9b040', '#5b8c32', '#7de0f0', '#d04558', '#f558b0', '#7048a5', '#b8996b', '#286060', '#98ef90'];

/* [from x, to x, cell width, cell height, jitter, share that is coloured] */
const ZONES = [
  [700, 860, 34, 30, 0.5, 0],
  [860, 1100, 42, 34, 0.5, 0],
  [1100, 1270, 34, 30, 0.35, 0.02],
  [1270, 1500, 19, 20, 0.22, 0.18],
  [1500, 2190, 13, 15, 0.5, 0.19],
];

const makeCounties = () => {
  let seed = 20203;
  const rand = () => {
    seed = (seed * 16807) % 2147483647;
    return seed / 2147483647;
  };
  const filled = TONES.map(() => '');
  let lines = '';
  ZONES.forEach(([x0, x1, cw, ch, jitter, share]) => {
    const cols = Math.round((x1 - x0) / cw);
    const rows = Math.ceil(1060 / ch);
    const pt = [];
    for (let r = 0; r <= rows; r += 1) {
      pt.push([]);
      for (let c = 0; c <= cols; c += 1) {
        const edge = c === 0 || c === cols;
        const x = x0 + ((x1 - x0) * c) / cols + (edge ? 0 : (rand() - 0.5) * cw * jitter * 1.4);
        const y = 245 + r * ch + (rand() - 0.5) * ch * jitter * 1.4;
        pt[r].push(`${Math.round(x)} ${Math.round(y)}`);
      }
    }
    for (let r = 0; r < rows; r += 1) {
      for (let c = 0; c < cols; c += 1) {
        const cell = `M${pt[r][c]}L${pt[r][c + 1]}L${pt[r + 1][c + 1]}L${pt[r + 1][c]}z`;
        lines += cell;
        if (rand() < share) filled[Math.floor(rand() * TONES.length)] += cell;
      }
    }
  });
  return { filled, lines };
};

const counties = makeCounties();

const CountyMap = () => (
  <svg viewBox="0 0 1160 428" preserveAspectRatio="xMidYMid slice" role="img" aria-label="County elections map">
    <defs>
      <clipPath id="lower48"><polygon points={US} /></clipPath>
    </defs>
    <g transform="translate(-5 -43) scale(.3827 .3333)">
      {LAND.map((p) => <polygon key={p} points={p} fill="#f2f2f2" />)}
      {WATER.map((p) => <polygon key={p} points={p} fill="#d0d4d5" />)}
    </g>
    <g className="city">
      <text x="275" y="41">Vancouver</text>
      <text x="263" y="184">San</text>
      <text x="242" y="202">Francisco</text>
      <text x="260" y="254">Los Angeles</text>
      <text x="682" y="137">Toronto</text>
      <text x="596" y="171">Chicago</text>
      <text x="746" y="165">New York</text>
    </g>
    <g transform="translate(-5 -43) scale(.3827 .3333)">
      <g clipPath="url(#lower48)">
        <polygon points={US} fill="#828282" />
        {counties.filled.map((d, i) => <path key={TONES[i]} d={d} fill={TONES[i]} />)}
        <path d={counties.lines} fill="none" stroke="#b0b0b0" strokeWidth="1.4" />
        <polygon points="2060,428 2080,405 2087,345 2095,300 2135,300 2148,365 2125,440" fill="#828282" />
        <polygon points="1488,340 1620,380 1560,440 1545,400 1488,380" fill="#828282" />
        {BIG_COUNTIES.map(([fill, p]) => (
          <polygon key={p} points={p} fill={fill} stroke="#b4b4b4" strokeWidth="1.2" />
        ))}
      </g>
    </g>
    <g className="water">
      <text className="west" x="55" y="181">North</text>
      <text className="west" x="64" y="211">Pacific</text>
      <text className="west" x="58" y="241">Ocean</text>
      <text x="1129" y="53">North</text>
      <text x="1112" y="83">Atlantic</text>
      <text x="1127" y="114">Ocean</text>
    </g>
    <text className="country" x="441" y="417">MÉXICO</text>
  </svg>
);

const Center = styled.div`
  display: flex;
  flex-direction: column;
  min-width: 0;
  min-height: 0;
`;

const ViewTabs = styled.div`
  display: flex;
  justify-content: space-between;
  align-items: center;
  height: 36px;
  padding-right: 5px;
  border-bottom: 3px solid #1577bb;
`;

const ViewTab = styled.div`
  display: flex;
  align-items: center;
  gap: 7px;
  height: 36px;
  margin-bottom: -3px;
  padding: 1px 8px 0 9px;
  border-radius: 4px 4px 0 0;
  background: #0779c8;
  color: #e8f5fd;
`;

const StatusBar = styled.div`
  display: flex;
  align-items: center;
  height: 37px;
  padding: 0 1px 0 8px;
  border: 1px solid #d4d6d8;
  border-top: none;
  background: #f8f8f8;

  .snap { display: flex; gap: 8px; margin: 0 10px 0 8px; }
  .features { display: flex; align-items: center; gap: 5px; margin: 0 8px; color: #a2a2a2; }
  .coords { display: flex; align-items: center; gap: 14px; padding-top: 4px; }
`;

const Picker = styled.select`
  appearance: none;
  width: ${(p) => p.$w}px;
  height: 33px;
  margin-right: 7px;
  padding: 0 8px;
  border: 2px solid ${(p) => (p.$bare ? 'transparent' : '#8e8e8e')};
  color: #333;
  background: #fff;
`;

const PickerWrap = styled.span`
  position: relative;
  display: inline-flex;

  svg { position: absolute; right: 15px; top: 14px; pointer-events: none; }
`;

const ScalePicker = ({ value, label, w, bare }) => (
  <PickerWrap>
    <Picker $w={w} $bare={bare} aria-label={label} defaultValue={value}>
      <option>{value}</option>
    </Picker>
    <svg width="8" height="5" viewBox="0 0 8 5"><path d="M0 0h8L4 5z" fill="#555" /></svg>
  </PickerWrap>
);

const ZoomGlyph = ({ faint }) => (
  <svg width="26" height="26" viewBox="0 0 26 26" fill="none" opacity={faint ? 0.45 : 0.7}>
    <path d="M10 2h14v13H10z" fill="#e3edf3" stroke="#8a9296" strokeWidth="1.5" />
    <path d={faint ? 'M10 6h14M10 10h14' : 'm12 4 5 5 6-6M17 9v6'} stroke="#8a9296" />
    <circle cx="8" cy="12" r="6.5" fill="#f3fafd" stroke="#6aa9cc" strokeWidth="1.6" />
    <path d="M8 9v6M5 12h6" stroke="#5a93b5" strokeWidth="1.6" />
    <path d="m13 17 6 7" stroke="#cf9d83" strokeWidth="3" />
  </svg>
);

const MapView = () => (
  <>
    <ViewTabs>
      <ViewTab>
        <MapThumb />
        Data Engineering
        <IconButton type="button" $w={20} aria-label="Close view"><Cross size={15} color="#cfe9fa" /></IconButton>
      </ViewTab>
      <Chevron size={13} />
    </ViewTabs>
    <MapFrame>
      <CountyMap />
      <MapBadge type="button" aria-label="Map notes">
        <svg width="32" height="28" viewBox="0 0 32 28">
          <path d="M1 6 4 1h8l3 3h16v22h-5v-3h-3v3h-4v-3h-3v3h-5v-3H9v3H1z" fill="#fff" stroke="#666" strokeWidth="1.7" />
          <path d="M6 12h20M6 18h20" stroke="#666" strokeWidth="1.7" />
        </svg>
      </MapBadge>
    </MapFrame>
    <StatusBar>
      <ScalePicker value="1:46,530,150" label="Map scale" w={150} />
      <Divider />
      <span className="snap">
        <GridPlus />
        <svg width="24" height="24" viewBox="0 0 24 24" fill="none" stroke="#8a8a8a" strokeWidth="1.6">
          <path d="M3 3h18v18H3zM3 7.500h18M3 12h18M3 16.500h18M7.500 3v18M12 3v18M16.500 3v18" />
        </svg>
        <svg width="26" height="24" viewBox="0 0 26 24" fill="none" stroke="#6b6b6b" strokeWidth="1.5">
          <path d="M1 3h7v4H1zM18 12h7v5h-7zM21 1v8M17 5h8" />
          <path d="m4 18 10-11 9 14M14 4h-3M14 4v3" stroke="#4b9bd0" strokeDasharray="3 2" />
          <path d="M3 21h20" stroke="#65b0c8" strokeWidth="2" />
          <path d="M1 19h4v4H1z" fill="#62a86b" stroke="#62a86b" />
        </svg>
        <svg width="24" height="24" viewBox="0 0 24 24" fill="none">
          <path d="M0 0h11v11H0z" fill="#d3ecd0" />
          <path d="M12 0v24M0 12h24" stroke="#555" strokeWidth="1.8" strokeDasharray="3 2" />
        </svg>
        <svg width="26" height="24" viewBox="0 0 26 24" fill="none">
          <path d="M2 17V7l6 9V6" stroke="#3f93d2" strokeWidth="3" />
          <path d="M13 0v24" stroke="#666" strokeWidth="1.5" />
          <path d="m13 22 12-12" stroke="#777" strokeWidth="1.3" />
          <path d="M15 2c4 0 5 2 5 7M17 6l3 4 3-4" stroke="#4b9bd0" strokeWidth="1.7" />
        </svg>
      </span>
      <Divider />
      <Spacer />
      <span className="coords">
        3,849,278.95W 1,124,416.24N m
        <Chevron size={15} weight={2.6} />
      </span>
      <Spacer />
      <Divider />
      <span className="features"><ZoomGlyph />Selected Features: 0</span>
      <Divider />
      <IconButton type="button" $w={42} aria-label="Pause drawing">
        <svg width="16" height="22" viewBox="0 0 16 22"><path d="M0 0h6v22H0zM10 0h6v22h-6z" fill="#585858" /></svg>
      </IconButton>
      <Divider />
      <IconButton type="button" $w={38} aria-label="Refresh map"><Refresh /></IconButton>
    </StatusBar>
  </>
);

/* ---------- attribute table ---------- */

const TableTabs = styled.div`
  display: flex;
  align-items: flex-end;
  gap: 40px;
  height: 46px;
  padding: 0 5px 0 8px;
  border-bottom: 4px solid #cfd0d2;
`;

const TableTab = styled.button`
  display: flex;
  align-items: center;
  gap: 7px;
  height: 33px;
  padding: 2px ${(p) => (p.$active ? 9 : 0)}px 0;
  border-radius: 5px 5px 0 0;
  color: ${(p) => (p.$active ? '#4c4c4c' : '#222')};
  background: ${(p) => (p.$active ? '#cfd0d2' : 'transparent')};
  .close { margin-left: 6px; }
`;

const TablePane = styled.section`
  display: flex;
  flex-direction: column;
  padding: 2px 2px 0;
  border: 1px solid #d0d2d4;
  border-top: none;
  background: #f8f8f8;
`;

const CommandBar = styled.div`
  display: flex;
  align-items: center;
  height: 46px;
  margin-bottom: 2px;
  padding: 0 8px 0 7px;
  border: 2px solid #bcbec2;
  background: #eef0f3;
  white-space: nowrap;
`;

const CommandLabel = styled.strong`
  margin: 0 11px 0 ${(p) => (p.$spaced ? 10 : 0)}px;
  color: #3c3c3c;
`;

const Command = styled.button`
  display: flex;
  align-items: center;
  gap: ${(p) => p.$gap || 6}px;
  margin-right: 15px;
  color: ${(p) => (p.disabled ? '#bfc1c4' : '#4c4c4c')};
  cursor: ${(p) => (p.disabled ? 'default' : 'pointer')};
  svg { opacity: ${(p) => (p.disabled ? 0.5 : 1)}; }
`;

const GridShell = styled.div`
  display: grid;
  grid-template-columns: minmax(0, 1fr) 25px;
  grid-template-rows: 158px 28px;
  border: 1px solid #cfd1d3;
  background: #ebebeb;
`;

const GridClip = styled.div`
  overflow: hidden;
`;

const DataGrid = styled.table`
  width: 100%;
  table-layout: fixed;
  border-collapse: collapse;

  th, td {
    padding: 0 6px;
    border-right: 1px solid #cacaca;
    border-bottom: 2px solid #cacaca;
    text-align: left;
    font-weight: 400;
    white-space: nowrap;
    overflow: hidden;
  }
  td, tbody th { height: 38px; }
  tbody tr:nth-child(odd) td { background: #fff; }
  tbody th { background: #ebebeb; }
  thead th {
    height: 38px;
    border-bottom-width: 0;
    color: #3c3c3c;
    font-size: 16px;
    font-weight: 700;
  }
  .num { text-align: right; }
  thead .picked { background: #c6e1f5; box-shadow: inset 0 -3px 0 #1577bb; }
  tbody tr:first-child .picked { background: #c6e1f5; }
  tbody tr:first-child th { background: #c6e1f5; box-shadow: inset -3px 0 0 #1577bb; }
  .corner { background: #fff; }
`;

const VScroll = styled.div`
  display: flex;
  flex-direction: column;
  align-items: center;
  padding: 8px 0;

  .thumb { width: 13px; height: 32px; margin: 9px 0 auto; border-radius: 7px; background: #b5b5b5; }
`;

const HScroll = styled.div`
  display: flex;
  align-items: center;
  padding: 0 6px 0 8px;

  .thumb { width: 63px; height: 13px; margin: 0 auto 0 8px; border-radius: 7px; background: #b5b5b5; }
`;

const TableFooter = styled.div`
  display: flex;
  align-items: center;
  height: 38px;

  .nav { display: flex; gap: 20px; margin: 0 20px 0 16px; }
  .filters {
    display: flex;
    align-items: center;
    gap: 7px;
    height: 34px;
    margin: 0 6px 0 7px;
    padding: 0 4px;
    background: #eff0f2;
  }
`;

const ViewToggle = styled.button`
  display: grid;
  place-items: center;
  width: 48px;
  height: 35px;
  border: 2px solid ${(p) => (p.$active ? '#4aa0d8' : 'transparent')};
  background: ${(p) => (p.$active ? '#bdbfc3' : 'transparent')};
`;

const ZoomSlider = styled.input`
  appearance: none;
  width: 150px;
  height: 20px;
  margin: 0 6px 0 4px;
  background: transparent;

  &::-webkit-slider-runnable-track {
    height: 5px;
    background: linear-gradient(to right, #a3a3a3 50%, #e0e0e0 50%);
  }
  &::-webkit-slider-thumb {
    appearance: none;
    width: 4px;
    height: 16px;
    margin-top: -6px;
    background: #6e6e6e;
  }
`;

const fields = [
  { key: 'id', label: 'OBJECTID *', w: 106 },
  { key: 'shape', label: 'Shape *', w: 75 },
  { key: 'county', label: 'county_fips1', w: 201, picked: true },
  { key: 'fips', label: 'fips', w: 145 },
  { key: 'name', label: 'name', w: 202 },
  { key: 'pop', label: 'population', w: 101, num: true },
  { key: 'density', label: 'pop_sqmi', w: 91, num: true },
  { key: 'sqmi', label: 'sqmi', w: 71, num: true, headLeft: true },
  { key: 'state', label: 'state_abbr' },
];

const records = [
  { id: '1', shape: 'Polygon', county: '001', fips: '01001', name: 'Autauga County', pop: '58805', density: '97.3', sqmi: '604.37', state: 'AL' },
  { id: '2', shape: 'Polygon', county: '003', fips: '01003', name: 'Baldwin County', pop: '231767', density: '141.9', sqmi: '1633.14', state: 'AL' },
  { id: '3', shape: 'Polygon', county: '005', fips: '01005', name: 'Barbour County', pop: '25223', density: '27.9', sqmi: '904.52', state: 'AL' },
  {},
];

const cls = (f, head) => [f.picked && 'picked', f.num && !(head && f.headLeft) && 'num'].filter(Boolean).join(' ') || undefined;

const Bars = ({ tones, width = 22, height = 22 }) => (
  <svg width={width} height={height} viewBox="0 0 22 22" preserveAspectRatio="none">
    {tones.map((t, i) => (
      <rect key={i} x="1" y={1 + (i * 20) / tones.length} width="20" height={20 / tones.length} fill={t} stroke="#707980" strokeWidth="1.5" />
    ))}
  </svg>
);

const AttributeTable = () => {
  const [zoom, setZoom] = useState(50);
  return (
    <>
      <TableTabs>
        <TableTab type="button">
          <Drawing name="dataEngineering" size={24} />
          CountyElections2020
        </TableTab>
        <TableTab type="button" $active>
          <svg width="24" height="24" viewBox="0 0 22 22"><TableGlyph /></svg>
          CountyElections2020
          <span className="close"><Cross size={15} /></span>
        </TableTab>
        <Spacer />
        <IconButton type="button" $w={13} $h={34} aria-label="Table views"><Chevron size={13} /></IconButton>
      </TableTabs>
      <TablePane>
        <CommandBar>
          <CommandLabel>Field:</CommandLabel>
          <Command type="button">
            <svg width="23" height="24" viewBox="0 0 23 24">
              <TableGlyph />
              <path d="M8 12v12M2 18h12" stroke="#eef0f3" strokeWidth="5" />
              <path d="M8 13v11M3 18.500h10" stroke="#555" strokeWidth="2.4" />
            </svg>
            Add
          </Command>
          <Command type="button">
            <svg width="23" height="24" viewBox="0 0 23 24">
              <TableGlyph />
              <path d="M9 12h8v11H9z" fill="#fff" stroke="#eef0f3" strokeWidth="2" />
              <path d="M10 15h7M10 22h7M3 22h4" stroke="#555" strokeWidth="2.2" />
            </svg>
            Calculate
          </Command>
          <Divider $h={32} $color="#c3c5c9" />
          <CommandLabel $spaced>Selection:</CommandLabel>
          <Command type="button" $gap={4}>
            <svg width="25" height="25" viewBox="0 0 25 25">
              <path d="M1 1h13v14H1z" fill="#fff" stroke="#666" strokeWidth="1.5" />
              <path d="M1 1h6l2 6-3 8H1z" fill="#aee8fb" />
              <TableGlyph x={9} y={9} w={16} h={16} cols={3} line="#555" />
            </svg>
            Select By Attributes
          </Command>
          <Command type="button" disabled $gap={4}><ZoomGlyph faint />Zoom To</Command>
          <Command type="button" $gap={4}>
            <svg width="25" height="25" viewBox="0 0 25 25" fill="none" stroke="#4c4c4c" strokeWidth="1.7">
              <path d="M1 1h14v4H1zM1 5h14v4H1zM10 14h14v10H10zM10 17.500h14M10 21h14" fill="#fff" />
              <path d="M10 17.500h14v3.500H10z" fill="#a9d7ea" />
              <path d="M17 4c4 0 5 2 5 6M19 8l3 3 2-3M5 24V14M2 17l3-3 3 3" />
            </svg>
            Switch
          </Command>
          <Command type="button" disabled><Bars tones={['#fff', '#fff', '#fff', '#fff']} />Clear</Command>
          <Command type="button" disabled>
            <svg width="23" height="24" viewBox="0 0 23 24" fill="none" stroke="#707980" strokeWidth="1.5">
              <path d="M1 1h21v18H1zM1 6h21M1 10h21" fill="#fff" />
              <path d="M1 10h21v5H1z" fill="#a9d7ea" />
              <path d="m3 15 8 8M11 15l-8 8" stroke="#c84f28" strokeWidth="2.4" />
            </svg>
            Delete
          </Command>
          <Command type="button" disabled $gap={4}>
            <svg width="25" height="25" viewBox="0 0 25 25" fill="none" stroke="#707980" strokeWidth="1.5">
              <path d="M5 1h19v14h-4V9H5z" fill="#fff" />
              <path d="M5 1h19v4H5z" fill="#a9d7ea" />
              <path d="M1 9h18v15H1zM1 14h18M1 19h18" fill="#fff" />
              <path d="M1 14h18v5H1z" fill="#a9d7ea" />
            </svg>
            Copy
          </Command>
          <Spacer />
          <IconButton type="button" $w={22} aria-label="Table menu">
            <svg width="22" height="18" viewBox="0 0 22 18">
              <path d="M2 2h18M2 9h18M2 16h18" stroke="#4c4c4c" strokeWidth="3.4" strokeLinecap="round" />
            </svg>
          </IconButton>
        </CommandBar>
        <GridShell>
          <GridClip>
            <DataGrid>
              <colgroup>
                <col style={{ width: 26 }} />
                {fields.map((f) => <col key={f.key} style={{ width: f.w }} />)}
              </colgroup>
              <thead>
                <tr>
                  <th className="corner">
                    <svg width="14" height="14" viewBox="0 0 14 14"><path d="M14 0v14H0z" fill="#c4c4c4" /></svg>
                  </th>
                  {fields.map((f) => <th key={f.key} scope="col" className={cls(f, true)}>{f.label}</th>)}
                </tr>
              </thead>
              <tbody>
                {records.map((r, i) => (
                  <tr key={r.id || 'next'}>
                    <th scope="row">{r.id && i + 1}</th>
                    {fields.map((f) => <td key={f.key} className={cls(f)}>{r[f.key]}</td>)}
                  </tr>
                ))}
              </tbody>
            </DataGrid>
          </GridClip>
          <VScroll>
            <Chevron dir="up" size={12} weight={1.6} />
            <span className="thumb" />
            <Chevron size={12} weight={1.6} />
          </VScroll>
          <HScroll>
            <Chevron dir="left" size={12} weight={1.6} />
            <span className="thumb" />
            <Chevron dir="right" size={12} weight={1.6} />
          </HScroll>
        </GridShell>
        <TableFooter>
          <ViewToggle type="button" $active aria-label="Show all records">
            <Bars width={24} height={20} tones={['#fff', '#b8dcee', '#fff', '#fff']} />
          </ViewToggle>
          <ViewToggle type="button" aria-label="Show selected records">
            <Bars width={24} height={16} tones={['#a5d4e4', '#a5d4e4', '#a5d4e4']} />
          </ViewToggle>
          <span className="nav">
            <svg width="14" height="14" viewBox="0 0 14 14"><path d="M1 0v14M13 1v12L4 7z" stroke="#bdbdbd" strokeWidth="1.5" fill="#bdbdbd" /></svg>
            <svg width="14" height="14" viewBox="0 0 14 14"><path d="M13 0v14M1 1v12l9-6z" stroke="#505050" strokeWidth="1.5" fill="#505050" /></svg>
          </span>
          0 of 3,112 selected
          <Spacer />
          Filters:
          <span className="filters">
            <svg width="24" height="24" viewBox="0 0 24 24" fill="none" stroke="#c7cccf" strokeWidth="1.6">
              <circle cx="12" cy="12" r="10.5" /><circle cx="12" cy="12" r="8" /><path d="M12 5v8h6" />
            </svg>
            <svg width="24" height="24" viewBox="0 0 24 24" fill="none" stroke="#c7cccf" strokeWidth="1.6">
              <path d="M20 5a10 10 0 1 1-17 6" />
              <path d="M5 9V1M2 4l3-3 3 3M11 1v9M8 7l3 3 3-3M17 9V1M14 4l3-3 3 3" />
              <path d="M12 14h8c0 4-3 7-6 7z" fill="#c7cccf" />
            </svg>
          </span>
          <svg width="26" height="26" viewBox="0 0 26 26">
            <path d="M1 2h18l-6 9v12H8V11z" fill="#9a9a9a" stroke="#666" strokeWidth="1.4" />
            <path d="M13 11h12v13H13z" fill="#e4f3fb" stroke="#4b94c6" strokeWidth="1.8" strokeDasharray="3 2" />
            <path d="M17 11v13M21 11v13M13 15h12M13 20h12" stroke="#4b94c6" strokeDasharray="3 2" />
          </svg>
          <Divider $h={22} />
          <svg width="34" height="24" viewBox="0 0 34 24" fill="none" strokeWidth="3">
            <path d="M17 3v9M11.500 8 17 2l5.500 6" stroke="#a5cfa5" />
            <path d="M17 21v-9M11.500 16l5.500 6 5.500-6" stroke="#ecc79a" />
          </svg>
          <IconButton type="button" $w={30} aria-label="Zoom out">
            <svg width="10" height="12" viewBox="0 0 12 12"><path d="M0 6h12" stroke="#4c4c4c" strokeWidth="3" /></svg>
          </IconButton>
          <ZoomSlider
            type="range"
            aria-label="Row zoom"
            value={zoom}
            onChange={(e) => setZoom(Number(e.target.value))}
          />
          <IconButton type="button" $w={26} aria-label="Zoom in">
            <svg width="13" height="13" viewBox="0 0 12 12"><path d="M0 6h12M6 0v12" stroke="#4c4c4c" strokeWidth="2.6" /></svg>
          </IconButton>
          <ScalePicker value="100%" label="Zoom level" w={90} bare />
          <Divider />
          <IconButton type="button" $w={42} aria-label="Refresh table"><Refresh /></IconButton>
        </TableFooter>
      </TablePane>
    </>
  );
};

/* ---------- attributes pane ---------- */

const Side = styled.aside`
  display: flex;
  flex-direction: column;
  min-height: 0;

  > section { flex: 1; }
`;

const PaneTabs = styled.div`
  display: flex;
  gap: 16px;
  padding: 13px 0 18px 11px;
`;

const PaneTab = styled.button`
  height: 28px;
  font-size: 18px;
  line-height: 20px;
  padding-bottom: 4px;
  border-bottom: 3px solid ${(p) => (p.$active ? '#1577ab' : 'transparent')};
  font-weight: ${(p) => (p.$active ? 700 : 400)};
`;

const Notice = styled.div`
  display: flex;
  align-items: center;
  gap: 27px;
  height: 40px;
  margin: 0 7px 0 8px;
  padding: 0 11px 0 19px;
  background: #dceefa;

  button { margin-left: auto; }
`;

const PickRow = styled.button`
  display: flex;
  align-items: center;
  gap: 12px;
  height: 86px;
  padding: 0 10px 0 24px;
  text-align: left;
  span { flex: 1; }
`;

const Splitter = styled.div`
  height: 18px;
  margin-top: 108px;
  background: #ebebeb;
`;

const DockTabs = styled.div`
  display: flex;
  height: 33px;
`;

const DockTab = styled.button`
  height: 34px;
  padding: 2px 9px 0;
  ${(p) => p.$active && css`
    margin: -1px 0 0 3px;
    border: 1px solid #d0d2d4;
    border-top-color: #f8f8f8;
    border-radius: 0 0 5px 5px;
    background: #f8f8f8;
    color: #1878be;
  `}
`;

const Attributes = () => (
  <Side>
    <Panel $radius="4px 4px 0 0">
      <PanelHead>
        <h2>Attributes</h2>
        <IconButton type="button" aria-label="Help">
          <svg width="9" height="15" viewBox="0 0 9 15" fill="none" stroke="#4c4c4c" strokeWidth="2">
            <path d="M1 4C1 0 8 0 8 4c0 3-3.500 3-3.500 6.500M4.500 12.500V15" />
          </svg>
        </IconButton>
        <IconButton type="button" aria-label="Options"><Chevron size={13} /></IconButton>
        <IconButton type="button" aria-label="Pin"><Pin /></IconButton>
        <IconButton type="button" aria-label="Close"><Cross size={15} /></IconButton>
      </PanelHead>
      <PaneTabs>
        <PaneTab type="button" $active>Selection</PaneTab>
        <PaneTab type="button">Layers</PaneTab>
      </PaneTabs>
      <Notice>
        <svg width="18" height="18" viewBox="0 0 18 18">
          <circle cx="9" cy="9" r="9" fill="#4a9fd4" />
          <path d="M7.500 3.500h3v2.500h-3zM6.500 7.500h4v5h1.200V14H6.500v-1.500h1.300V9H6.500z" fill="#fff" />
        </svg>
        Make a selection.
        <button type="button" aria-label="Dismiss"><Cross size={14} color="#888" /></button>
      </Notice>
      <PickRow type="button">
        <svg width="34" height="36" viewBox="0 0 34 36">
          <path d="M12 1h21v21H12z" fill="#fff" />
          <path d="M12 1h7c1 7 5 12 8 21H12z" fill="#b5ecfb" />
          <path d="M12 22V1h21v21H12M19 1c1 7 4 9 5 13l3 8M23 11c3-4 6-4 10-4" fill="none" stroke="#6a7074" strokeWidth="1.3" />
          <path d="M2 13v19l5-5 4 8 3-1.500-4-8h7z" fill="#fff" stroke="#555" strokeWidth="1.3" />
        </svg>
        <span>Select one or more features</span>
        <Chevron size={13} color="#222" weight={2.4} />
      </PickRow>
      <Splitter />
    </Panel>
    <DockTabs>
      <DockTab type="button">Catalog</DockTab>
      <DockTab type="button">Symbology</DockTab>
      <DockTab type="button" $active>Attributes</DockTab>
    </DockTabs>
  </Side>
);

const App = () => (
  <Page>
    <GlobalStyle />
    <Title />
    <Ribbon />
    <Workspace>
      <Contents />
      <Center>
        <MapView />
        <AttributeTable />
      </Center>
      <Attributes />
    </Workspace>
  </Page>
);

export default App;
